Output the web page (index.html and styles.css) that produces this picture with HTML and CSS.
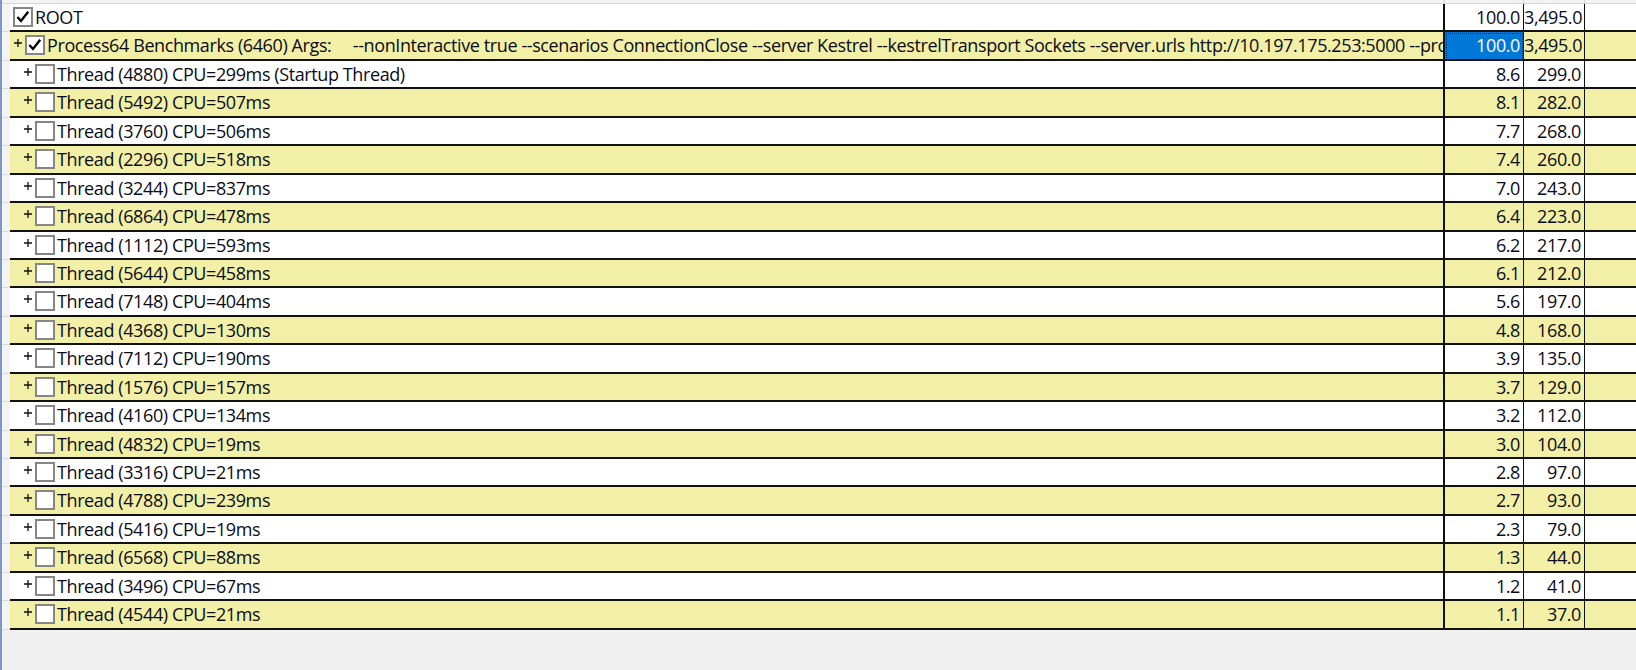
FILE: index.html
```html
<!DOCTYPE html>
<html>
<head>
<meta charset="utf-8">
<link rel="stylesheet" href="styles.css">
</head>
<body>
<div class="window">
  <div class="edge"></div>
  <div class="main">
    <div class="header">
      <div class="hcell hrh"></div>
      <div class="hcell hname"></div>
      <div class="hcell hpct"></div>
      <div class="hcell hval"></div>
      <div class="hcell hfill"></div>
    </div>
    <div class="rows" id="rows">
      <div class="row even">
        <div class="rh"></div>
        <div class="name lvl0"><span class="cb checked"><svg viewBox="0 0 20 20"><polyline points="3,10 7.5,15 16.5,3.5"/></svg></span><span class="label">ROOT</span></div>
        <div class="num pct">100.0</div>
        <div class="num val">3,495.0</div>
        <div class="fill"></div>
      </div>
      <div class="row odd">
        <div class="rh"></div>
        <div class="name lvl1"><span class="exp"><svg viewBox="0 0 8 8"><path d="M4 0V8M0 4H8"/></svg></span><span class="cb checked"><svg viewBox="0 0 20 20"><polyline points="3,10 7.5,15 16.5,3.5"/></svg></span><span class="label">Process64 Benchmarks (6460) Args:     --nonInteractive true --scenarios ConnectionClose --server Kestrel --kestrelTransport Sockets --server.urls http://10.197.175.253:5000 --protocol http --session 2f1c3a</span></div>
        <div class="num pct selected">100.0</div>
        <div class="num val">3,495.0</div>
        <div class="fill"></div>
      </div>
    </div>
    <div class="rest"></div>
  </div>
</div>
<script src="app.js"></script>
</body>
</html>
```
FILE: app.js
```js
var data = [
  ["Thread (4880) CPU=299ms (Startup Thread)", "8.6", "299.0"],
  ["Thread (5492) CPU=507ms", "8.1", "282.0"],
  ["Thread (3760) CPU=506ms", "7.7", "268.0"],
  ["Thread (2296) CPU=518ms", "7.4", "260.0"],
  ["Thread (3244) CPU=837ms", "7.0", "243.0"],
  ["Thread (6864) CPU=478ms", "6.4", "223.0"],
  ["Thread (1112) CPU=593ms", "6.2", "217.0"],
  ["Thread (5644) CPU=458ms", "6.1", "212.0"],
  ["Thread (7148) CPU=404ms", "5.6", "197.0"],
  ["Thread (4368) CPU=130ms", "4.8", "168.0"],
  ["Thread (7112) CPU=190ms", "3.9", "135.0"],
  ["Thread (1576) CPU=157ms", "3.7", "129.0"],
  ["Thread (4160) CPU=134ms", "3.2", "112.0"],
  ["Thread (4832) CPU=19ms", "3.0", "104.0"],
  ["Thread (3316) CPU=21ms", "2.8", "97.0"],
  ["Thread (4788) CPU=239ms", "2.7", "93.0"],
  ["Thread (5416) CPU=19ms", "2.3", "79.0"],
  ["Thread (6568) CPU=88ms", "1.3", "44.0"],
  ["Thread (3496) CPU=67ms", "1.2", "41.0"],
  ["Thread (4544) CPU=21ms", "1.1", "37.0"]
];
var rows = document.getElementById("rows");
data.forEach(function (d, i) {
  var r = document.createElement("div");
  r.className = "row " + (i % 2 === 0 ? "even" : "odd");
  r.innerHTML =
    '<div class="rh"></div>' +
    '<div class="name lvl2"><span class="exp"><svg viewBox="0 0 8 8"><path d="M4 0V8M0 4H8"/></svg></span>' +
    '<span class="cb"></span><span class="label"></span></div>' +
    '<div class="num pct"></div><div class="num val"></div><div class="fill"></div>';
  r.querySelector(".label").textContent = d[0];
  r.querySelector(".pct").textContent = d[1];
  r.querySelector(".val").textContent = d[2];
  rows.appendChild(r);
});
```
FILE: styles.css
```css
html, body {
  margin: 0;
  padding: 0;
  width: 1636px;
  height: 670px;
  overflow: hidden;
  background: #f0f0f0;
}
.window {
  display: flex;
  height: 670px;
  font-family: "Open Sans", "Noto Sans", sans-serif;
  font-size: 18px;
  letter-spacing: -0.4px;
  color: #0b0b18;
}
.edge {
  width: 2px;
  background: #7b98c6;
  flex: none;
}
.main {
  flex: 1;
  display: flex;
  flex-direction: column;
}
.header {
  height: 4px;
  display: grid;
  grid-template-columns: 8px 1435px 79px 61px 1fr;
  background: #f3f3f3;
  border-bottom: 1px solid #d6d6d6;
  box-sizing: border-box;
}
.hcell { border-right: 1px solid #cfcfcf; }
.hfill, .hrh { border-right: none; }
.row {
  display: grid;
  grid-template-columns: 8px 1435px 79px 61px 1fr;
  height: 28.45px;
  box-sizing: border-box;
}
.row.even { background: #ffffff; }
.row.odd { background: #f2f0a6; }
.rh {
  background: #f4f4f4;
  border-bottom: 1px solid #d9d9d9;
}
.name, .num, .fill {
  border-bottom: 2px solid #111;
  box-sizing: border-box;
}
.name {
  display: flex;
  align-items: flex-start;
  overflow: hidden;
  white-space: pre;
  border-right: 2px solid #111;
}
.lvl0 { padding-left: 3px; }
.lvl1 { padding-left: 4px; }
.lvl2 { padding-left: 14px; }
.exp {
  flex: none;
  width: 8px;
  height: 8px;
  margin-top: 7px;
  margin-right: 3px;
  display: block;
}
.exp svg { display: block; width: 8px; height: 8px; }
.exp path { stroke: #111; stroke-width: 1.3; fill: none; }
.cb {
  flex: none;
  width: 20px;
  height: 20px;
  margin-top: 3px;
  box-sizing: border-box;
  border: 2px solid #868686;
  background: #fff;
  display: block;
}
.cb svg { display: block; width: 16px; height: 16px; }
.cb polyline { fill: none; stroke: #000; stroke-width: 3; stroke-linejoin: miter; }
.label {
  margin-left: 2px;
  line-height: 26px;
}
.num {
  text-align: right;
  padding-right: 3px;
  line-height: 26px;
  border-right: 1.5px solid #111;
  white-space: nowrap;
  overflow: hidden;
}
.num.selected {
  background: #0078d7;
  color: #fff;
  outline: 1px dotted #1a1a1a;
  outline-offset: -2px;
}
.rest { flex: 1; background: #f0f0f0; }
```
